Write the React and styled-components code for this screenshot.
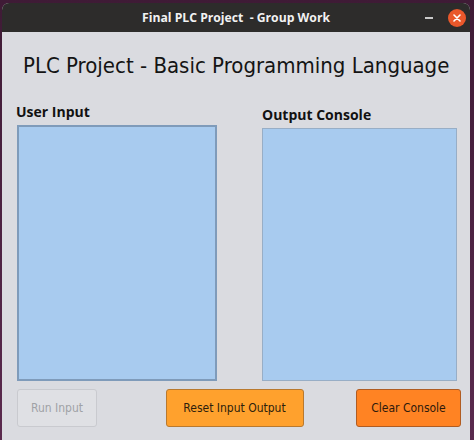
import React from 'react';
import styled, { createGlobalStyle } from 'styled-components';

const Global = createGlobalStyle`
    html, body {
        margin: 0;
        padding: 0;
        background: #4c2342;
        overflow: hidden;
    }
`;

const Desktop = styled.div`
    width: 474px;
    height: 440px;
    padding: 3px 4px 0 2px;
    box-sizing: border-box;
    background: linear-gradient(180deg, #3f1b36 0%, #5a2a4e 100%);
`;

const Window = styled.div`
    display: flex;
    flex-direction: column;
    height: 437px;
    border-radius: 7px 7px 0 0;
    overflow: hidden;
    background: #dadbe0;
`;

const TitleBar = styled.div`
    display: grid;
    grid-template-columns: 1fr auto 1fr;
    align-items: center;
    height: 29px;
    flex-shrink: 0;
    background: #2d2c2b;
    color: #f2f2f2;
    font-family: "Open Sans", "DejaVu Sans", sans-serif;
    font-weight: 700;
    font-size: 12.2px;
`;

const TitleText = styled.div`
    grid-column: 2;
    white-space: pre;
`;

const Controls = styled.div`
    grid-column: 3;
    display: flex;
    justify-content: flex-end;
    align-items: center;
    gap: 15px;
    padding-right: 4px;
`;

const Minimize = styled.span`
    width: 8px;
    height: 2px;
    background: #c9c9c9;
`;

const Close = styled.span`
    display: flex;
    align-items: center;
    justify-content: center;
    width: 18px;
    height: 18px;
    border-radius: 50%;
    background: #e9582b;
`;

const Body = styled.div`
    flex: 1;
    display: flex;
    flex-direction: column;
    padding: 0 9px 0 14px;
    font-family: "DejaVu Sans Condensed", "DejaVu Sans", sans-serif;
`;

const Heading = styled.h1`
    margin: 21px 0 0 0;
    padding-left: 7px;
    font-weight: 400;
    font-size: 22px;
    color: #141414;
    white-space: nowrap;
`;

const Panels = styled.div`
    display: grid;
    grid-template-columns: 201px 195px;
    justify-content: space-between;
    align-items: start;
    margin-top: 24px;
    padding-right: 4px;
`;

const Panel = styled.div`
    display: flex;
    flex-direction: column;
    padding-top: ${p => p.$offset}px;
`;

const Label = styled.div`
    font-family: "Open Sans", "DejaVu Sans", sans-serif;
    font-weight: 700;
    font-size: 14px;
    color: #111;
    height: 18px;
    margin-bottom: 5px;
`;

const Area = styled.div`
    box-sizing: border-box;
    margin-left: ${p => p.$shift}px;
    height: ${p => p.$h}px;
    background: #a8cbef;
    border: ${p => p.$strong ? '2px solid #7f9bba' : '1px solid #98aec6'};
`;

const Buttons = styled.div`
    display: flex;
    justify-content: space-between;
    align-items: center;
    margin-top: 8px;
    padding-left: 1px;
`;

const Button = styled.button`
    box-sizing: border-box;
    width: ${p => p.$w}px;
    height: 38px;
    margin-left: ${p => p.$nudge || 0}px;
    border-radius: 3px;
    font-family: "DejaVu Sans Condensed", "DejaVu Sans", sans-serif;
    font-size: 12px;
    background: ${p => p.$bg};
    border: 1px solid ${p => p.$border};
    color: ${p => p.$fg};
`;

export default function App() {
    return (
        <>
            <Global />
            <Desktop>
                <Window>
                    <TitleBar>
                        <TitleText>Final PLC Project  - Group Work</TitleText>
                        <Controls>
                            <Minimize />
                            <Close>
                                <svg width="8" height="8" viewBox="0 0 8 8">
                                    <path d="M1 1L7 7M7 1L1 7" stroke="#fff" strokeWidth="1.6" strokeLinecap="round" />
                                </svg>
                            </Close>
                        </Controls>
                    </TitleBar>
                    <Body>
                        <Heading>PLC Project - Basic Programming Language</Heading>
                        <Panels>
                            <Panel $offset={0}>
                                <Label>User Input</Label>
                                <Area $strong $shift={1} $h={256} />
                            </Panel>
                            <Panel $offset={3}>
                                <Label>Output Console</Label>
                                <Area $shift={0} $h={253} />
                            </Panel>
                        </Panels>
                        <Buttons>
                            <Button $w={80} $bg="#dfe0e4" $border="#c9cacf" $fg="#a0a2a6">Run Input</Button>
                            <Button $w={138} $nudge={16} $bg="#ffa12d" $border="#b9792e" $fg="#2e1e0c">Reset Input Output</Button>
                            <Button $w={105} $bg="#ff8323" $border="#b05c22" $fg="#2e1a0c">Clear Console</Button>
                        </Buttons>
                    </Body>
                </Window>
            </Desktop>
        </>
    );
}
